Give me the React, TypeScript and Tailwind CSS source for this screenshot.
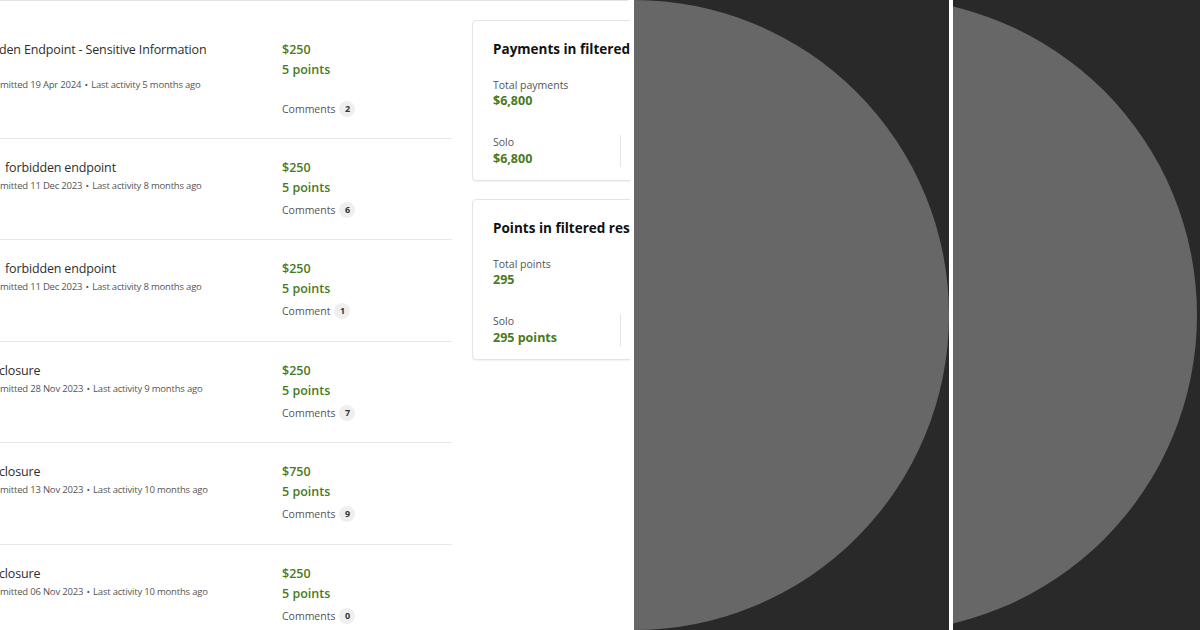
const rows = [
  {
    title: "den Endpoint - Sensitive Information",
    indent: false,
    meta: "mitted 19 Apr 2024",
    activity: "5 months ago",
    amount: "$250",
    label: "Comments",
    count: 2,
    first: true,
  },
  { title: "forbidden endpoint", indent: true, meta: "mitted 11 Dec 2023", activity: "8 months ago", amount: "$250", label: "Comments", count: 6 },
  { title: "forbidden endpoint", indent: true, meta: "mitted 11 Dec 2023", activity: "8 months ago", amount: "$250", label: "Comment", count: 1 },
  { title: "closure", indent: false, meta: "mitted 28 Nov 2023", activity: "9 months ago", amount: "$250", label: "Comments", count: 7 },
  { title: "closure", indent: false, meta: "mitted 13 Nov 2023", activity: "10 months ago", amount: "$750", label: "Comments", count: 9 },
  { title: "closure", indent: false, meta: "mitted 06 Nov 2023", activity: "10 months ago", amount: "$250", label: "Comments", count: 0 },
];

function ReportRow({ row, index }: { row: (typeof rows)[number]; index: number }) {
  const height = row.first ? "h-[138px] pt-[40px]" : index % 2 === 1 ? "h-[101px] pt-[20px]" : "h-[102px] pt-[20px]";
  return (
    <div className={`flex border-b border-[#e8e8e8] ${height}`}>
      <div className="w-[282px] shrink-0">
        <div
          className={`text-[12.5px] leading-[18px] tracking-[-0.15px] text-[#2e2e2e] whitespace-nowrap ${row.indent ? "pl-[5px]" : "-ml-[1px]"}`}
        >
          {row.title}
        </div>
        <div
          className={`text-[9.5px] leading-[14px] tracking-[-0.2px] text-[#555] whitespace-nowrap ${row.first ? "mt-[19px]" : "mt-[2px]"}`}
        >
          {row.meta} <span className="mx-[1px]">•</span> Last activity {row.activity}
        </div>
      </div>
      <div className="flex flex-col">
        <div className="text-[12.5px] leading-[18px] font-semibold text-[#4a7a20]">{row.amount}</div>
        <div className="text-[12.5px] leading-[20px] font-semibold text-[#4a7a20] mt-[1px]">5 points</div>
        <div className={`flex items-center gap-[4px] ${row.first ? "mt-[21px]" : "mt-[4px]"}`}>
          <span className="text-[10.5px] leading-[16px] text-[#555]">{row.label}</span>
          <span className="flex h-[16px] min-w-[16px] items-center justify-center rounded-full bg-[#efefef] text-[9px] font-bold text-[#333]">
            {row.count}
          </span>
        </div>
      </div>
    </div>
  );
}

function StatCard({
  title,
  totalLabel,
  total,
  solo,
}: {
  title: string;
  totalLabel: string;
  total: string;
  solo: string;
}) {
  return (
    <div className="w-[300px] h-[161px] rounded-[4px] border border-[#e4e4e4] bg-white shadow-[0_1px_2px_rgba(0,0,0,0.06)] pl-[20px] pt-[18px]">
      <div className="text-[13.5px] leading-[20px] font-bold text-[#111] whitespace-nowrap">{title}</div>
      <div className="mt-[19px] text-[10.5px] leading-[15px] text-[#555]">{totalLabel}</div>
      <div className="text-[12.5px] leading-[16px] font-bold text-[#4a7a20]">{total}</div>
      <div className="mt-[26px] flex">
        <div className="w-[128px] shrink-0 border-r border-[#e4e4e4] h-[32px]">
          <div className="text-[10.5px] leading-[15px] text-[#555]">Solo</div>
          <div className="mt-[1px] text-[12.5px] leading-[16px] font-bold text-[#4a7a20]">{solo}</div>
        </div>
      </div>
    </div>
  );
}

export default function App() {
  return (
    <div className="flex w-[1200px] h-[630px] overflow-hidden bg-white font-['Open_Sans',sans-serif]">
      <div className="w-[634px] shrink-0 pr-[4px]">
        <div className="h-full overflow-hidden">
          <div className="h-px w-[628px] bg-[#e4e4e4]" />
          <div className="flex gap-[20px]">
            <div className="w-[452px] shrink-0">
              {rows.map((row, i) => (
                <ReportRow key={i} row={row} index={i} />
              ))}
            </div>
            <div className="flex flex-col gap-[18px] pt-[19px]">
              <StatCard title="Payments in filtered results" totalLabel="Total payments" total="$6,800" solo="$6,800" />
              <StatCard title="Points in filtered results" totalLabel="Total points" total="295" solo="295 points" />
            </div>
          </div>
        </div>
      </div>

      <div className="w-[315px] shrink-0 bg-[#292929]">
        <svg width="315" height="630" viewBox="0 0 315 630">
          <circle cx="0" cy="315" r="315" fill="#676767" />
        </svg>
      </div>
      <div className="w-[4px] shrink-0 bg-white" />
      <div className="flex-1 bg-[#292929]">
        <svg width="247" height="630" viewBox="0 0 247 630">
          <circle cx="-73" cy="315" r="317" fill="#676767" />
        </svg>
      </div>
    </div>
  );
}
